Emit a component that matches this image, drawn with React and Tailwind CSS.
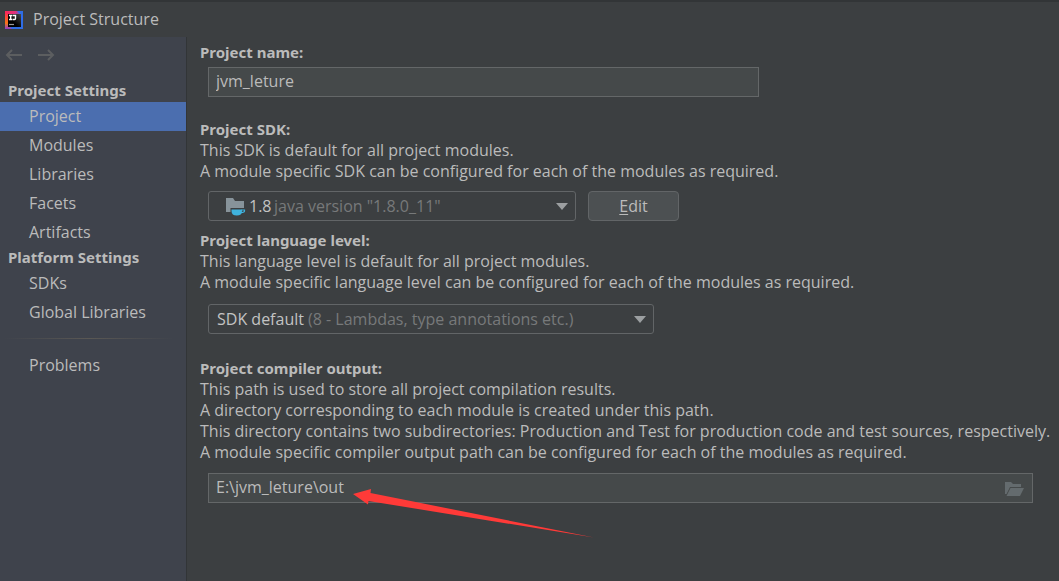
const projectItems = ["Project", "Modules", "Libraries", "Facets", "Artifacts"];
const platformItems = ["SDKs", "Global Libraries"];

function AppLogo() {
  return (
    <svg width="18" height="18" viewBox="0 0 18 18" aria-hidden="true">
      <defs>
        <linearGradient id="logo-warm" x1="0" y1="0" x2="0" y2="1">
          <stop offset="0" stopColor="#fe2857" />
          <stop offset="0.45" stopColor="#fc5b2b" />
          <stop offset="0.65" stopColor="#f97a12" />
          <stop offset="1" stopColor="#8a3ad0" />
        </linearGradient>
        <linearGradient id="logo-cool" x1="0" y1="0" x2="1" y2="0.6">
          <stop offset="0" stopColor="#fe2857" />
          <stop offset="0.45" stopColor="#e0307c" />
          <stop offset="0.75" stopColor="#2f6df0" />
          <stop offset="1" stopColor="#2f6df0" />
        </linearGradient>
        <linearGradient id="logo-core" x1="0" y1="1" x2="1" y2="0">
          <stop offset="0.4" stopColor="#000" />
          <stop offset="1" stopColor="#4a4a4a" />
        </linearGradient>
      </defs>
      <rect width="18" height="18" fill="#2f6de4" />
      <path d="M0 0H12L18 6V9H9L3 18H0Z" fill="url(#logo-cool)" />
      <path d="M0 1L4 4V15L7 18H0Z" fill="url(#logo-warm)" />
      <rect x="3" y="3" width="13" height="13" fill="url(#logo-core)" />
      <path d="M4 4.500H7.500M5.700 4.500V8.500M4 8.500H7.500M8 4.500H10.500V7.500Q10.500 8.500 9.500 8.500H8" stroke="#fff" strokeWidth="1.400" fill="none" />
      <path d="M4 13.500H9" stroke="#999" strokeWidth="1.200" />
    </svg>
  );
}

function Arrow({ forward }) {
  return (
    <svg width="17" height="12" viewBox="0 0 17 12" fill="none" stroke="#5c5e60" strokeWidth="2" aria-hidden="true">
      {forward ? <path d="M0 6H15M10 1L15 6L10 11" /> : <path d="M17 6H2M7 1L2 6L7 11" />}
    </svg>
  );
}

function SdkIcon() {
  return (
    <svg width="20" height="18" viewBox="0 0 20 18" aria-hidden="true">
      <path d="M0 0H7L9 3H18V14H0Z" fill="#87939a" />
      <path d="M4.500 10H20V14.500H17L15 18H7L4.500 14Z" fill="#3c3f41" />
      <path d="M5.500 11.500H16V13Q16 17.500 10.700 17.500Q5.500 17.500 5.500 13Z" fill="#3fb2dd" />
      <path d="M15.500 12H18.500V13Q18.500 14.500 15 14.700" stroke="#3fb2dd" strokeWidth="1.200" fill="none" />
    </svg>
  );
}

function FolderIcon() {
  return (
    <svg width="20" height="14" viewBox="0 0 20 14" fill="#646b6e" aria-hidden="true">
      <path d="M0 0H6L8 2H16V5H5L1.500 12H0Z" />
      <path d="M5.500 6H19L15 14H1.500Z" />
    </svg>
  );
}

function Item({ label, active }) {
  return (
    <li>
      <a
        href="#"
        aria-current={active ? "page" : undefined}
        className={`flex h-[29px] items-center pl-[29px] ${active ? "bg-[#4b6eaf]" : ""}`}
      >
        {label}
      </a>
    </li>
  );
}

function Combo({ id, value, detail, icon, className, selectClass, detailClass }) {
  return (
    <div className={`relative ${className}`}>
      <select
        id={id}
        className={`h-[30px] w-full appearance-none rounded-[3px] border border-[#626567] bg-[#3c3f41] text-[#c3c3c3] ${selectClass}`}
      >
        <option>{value}</option>
      </select>
      {icon && <span className="pointer-events-none absolute top-[7px] left-[18px]">{icon}</span>}
      <span className={`pointer-events-none absolute inset-y-0 flex items-center whitespace-nowrap text-[#77797a] ${detailClass}`}>
        {detail}
      </span>
      <svg className="pointer-events-none absolute top-3 right-2" width="12" height="7" aria-hidden="true">
        <path d="M0 0H12L6 7Z" fill="#9c9fa1" />
      </svg>
    </div>
  );
}

const labelClass = "block font-['Noto_Sans',sans-serif] text-[15px] font-bold";
const fieldClass = "h-[30px] w-full border border-[#646768] bg-[#45494a] pb-[2px] pl-[7px]";

export default function App() {
  return (
    <div className="flex min-h-screen flex-col border-t-2 border-[#323537] bg-[#3c3f41] font-['Open_Sans','Noto_Sans',sans-serif] text-[16px] leading-[21px] text-[#bbbbbb]">
      <header className="flex h-[35px] items-center gap-[10px] pl-[5px]">
        <AppLogo />
        <h1>Project Structure</h1>
      </header>
      <div className="flex grow">
        <nav className="w-[187px] shrink-0 border-r border-[#323537] bg-[#3f434c]">
          <div className="flex h-[43px] items-start gap-4 pt-3 pl-[5px]">
            <button type="button" aria-label="Back" disabled><Arrow /></button>
            <button type="button" aria-label="Forward" disabled><Arrow forward /></button>
          </div>
          <h2 className={`h-[22px] pl-2 ${labelClass}`}>Project Settings</h2>
          <ul>
            {projectItems.map((label, i) => <Item key={label} label={label} active={i === 0} />)}
          </ul>
          <h2 className={`h-[22px] pl-2 ${labelClass}`}>Platform Settings</h2>
          <ul>
            {platformItems.map((label) => <Item key={label} label={label} />)}
          </ul>
          <hr className="mr-3 ml-1 mt-[11px] mb-3 h-px border-0 bg-linear-to-r from-transparent via-[#5a5854] to-transparent" />
          <ul>
            <Item label="Problems" />
          </ul>
        </nav>
        <main className="min-w-0 grow pt-[5px] pl-[13px]">
          <section>
            <label htmlFor="name" className={labelClass}>Project name:</label>
            <div className="mt-1 max-w-[559px] pl-2">
              <input id="name" defaultValue="jvm_leture" className={fieldClass} />
            </div>
          </section>
          <section className="mt-[22px]">
            <label htmlFor="sdk" className={labelClass}>Project SDK:</label>
            <p>This SDK is default for all project modules.</p>
            <p>A module specific SDK can be configured for each of the modules as required.</p>
            <div className="mt-[9px] flex gap-3 pl-2">
              <Combo
                id="sdk"
                value="1.8"
                detail={'java version "1.8.0_11"'}
                icon={<SdkIcon />}
                className="w-[368px]"
                selectClass="pl-10"
                detailClass="left-[66px]"
              />
              <button type="button" className="h-[30px] w-[91px] rounded-[4px] border border-[#626567] bg-[#4c5052]">
                <span className="underline underline-offset-2">E</span>dit
              </button>
            </div>
          </section>
          <section className="mt-[9px]">
            <label htmlFor="level" className={labelClass}>Project language level:</label>
            <p>This language level is default for all project modules.</p>
            <p>A module specific language level can be configured for each of the modules as required.</p>
            <div className="mt-[11px] pl-2">
              <Combo
                id="level"
                value="SDK default"
                detail="(8 - Lambdas, type annotations etc.)"
                className="w-[446px]"
                selectClass="pl-2"
                detailClass="left-[100px]"
              />
            </div>
          </section>
          <section className="mt-6">
            <label htmlFor="output" className={labelClass}>Project compiler output:</label>
            <p>This path is used to store all project compilation results.</p>
            <p>A directory corresponding to each module is created under this path.</p>
            <p>This directory contains two subdirectories: Production and Test for production code and test sources, respectively.</p>
            <p>A module specific compiler output path can be configured for each of the modules as required.</p>
            <div className="relative mt-[10px] mr-[26px] ml-2">
              <input id="output" defaultValue="E:\jvm_leture\out" className={fieldClass} />
              <button type="button" aria-label="Browse" className="absolute top-[9px] right-2"><FolderIcon /></button>
              <svg className="pointer-events-none absolute top-4 left-[145px]" width="242" height="50" viewBox="0 0 242 50" aria-hidden="true">
                <path d="M0 5L18 0L17.500 4L241 48.500L15.500 12L15 15.500Z" fill="#ff3a38" />
              </svg>
            </div>
          </section>
        </main>
      </div>
    </div>
  );
}
